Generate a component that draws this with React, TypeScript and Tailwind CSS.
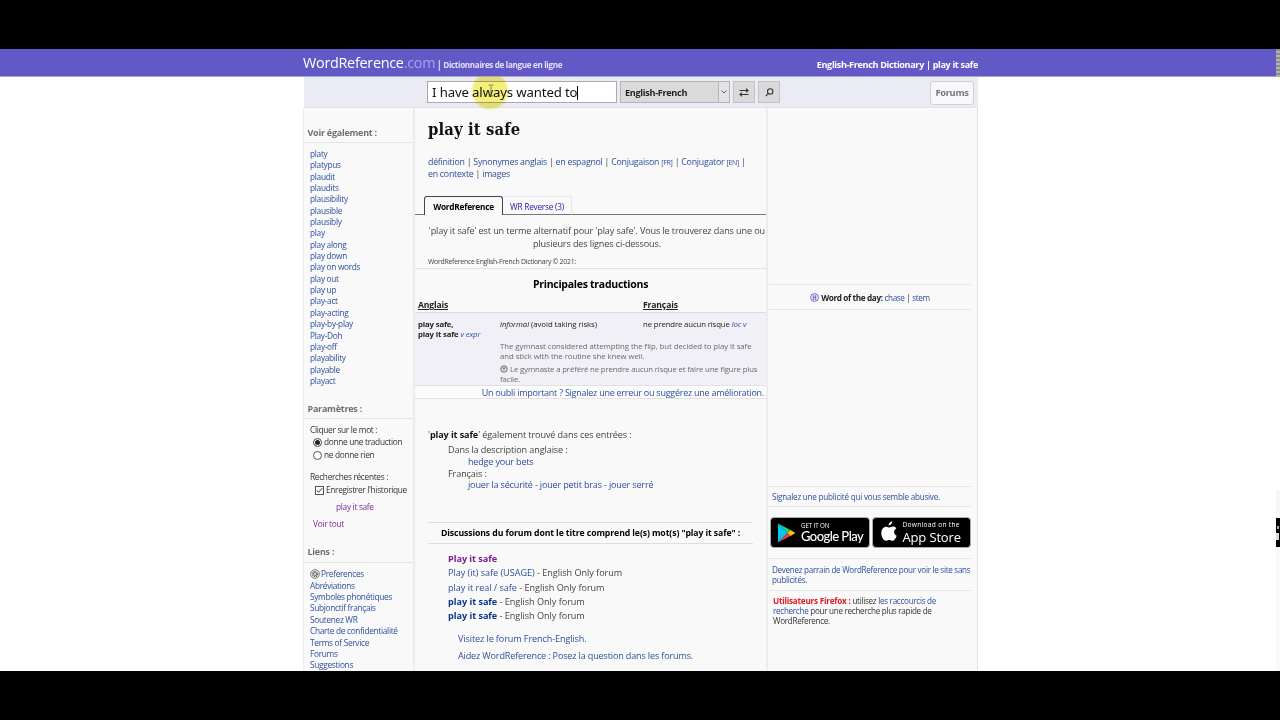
import React, { FC, ReactNode } from 'react'

const seeAlso = [
    'platy', 'platypus', 'plaudit', 'plaudits', 'plausibility', 'plausible', 'plausibly',
    'play', 'play along', 'play down', 'play on words', 'play out', 'play up', 'play-act',
    'play-acting', 'play-by-play', 'Play-Doh', 'play-off', 'playability', 'playable', 'playact',
]

const siteLinks = [
    'Abréviations', 'Symboles phonétiques', 'Subjonctif français', 'Soutenez WR',
    'Charte de confidentialité', 'Terms of Service', 'Forums', 'Suggestions',
]

const threads = [
    { title: 'Play it safe', style: 'font-bold text-[#7a1a8c]', forum: '' },
    { title: 'Play (it) safe (USAGE)', style: '', forum: 'English Only forum' },
    { title: 'play it real / safe', style: '', forum: 'English Only forum' },
    { title: 'play it safe', style: 'font-bold text-[#0b328f]', forum: 'English Only forum' },
    { title: 'play it safe', style: 'font-bold text-[#0b328f]', forum: 'English Only forum' },
]

const Link: FC<{ children: ReactNode; className?: string }> = ({ children, className = 'text-[#2c4f9c]' }) => (
    <a className={className}>{children}</a>
)

const SideTitle: FC<{ children: ReactNode; className: string }> = ({ children, className }) => (
    <h3 className={`flex items-end border-b border-[#e4e4e6] pl-[3.5px] text-[9px] leading-[12px] font-bold tracking-[-0.25px] text-[#70706f] ${className}`}>
        {children}
    </h3>
)

const Header: FC = () => (
    <header className="flex h-[28px] border-b border-[#a9a5cc] bg-[#6258c6] text-white">
        <div className="ml-[303px] flex w-[675px] items-baseline whitespace-nowrap">
            <span className="text-[14.4px] leading-[27px] tracking-[-0.28px]">
                WordReference<span className="text-[#aaa0f0]">.com</span>
            </span>
            <span className="ml-[1px] text-[11px]">|</span>
            <span className="ml-[1px] text-[8.1px] font-bold tracking-[-0.33px] text-[#e3e0fb]">Dictionnaires de langue en ligne</span>
            <span className="ml-auto text-[9.1px] font-bold tracking-[-0.35px]">English-French Dictionary | play it safe</span>
        </div>
        <div className="ml-auto w-[4px] bg-[repeating-linear-gradient(180deg,#8a8a8a_0px,#8a8a8a_2px,#b5b5b0_2px,#b5b5b0_4px)]" />
    </header>
)

const SearchBar: FC = () => (
    <div className="ml-[304px] flex h-[31px] w-[674px] border-b border-[#e2e2e8] bg-[#ebebf3] pt-[4px]">
        <div className="relative ml-[123px] flex h-[22px] w-[190px] items-center border border-[#a9a9b4] bg-white pt-px pl-[4px] font-['Noto_Sans',sans-serif] text-[13.2px] tracking-[-0.13px] whitespace-nowrap text-[#111]">
            I have always wanted to<span className="h-[14px] w-px bg-black" />
            {/* mouse highlight */}
            <div className="absolute -top-[9px] left-[44px] size-[36px] rounded-full bg-[#f0e850]/75 mix-blend-multiply blur-[1px]" />
            <svg className="absolute top-[2px] left-[59px]" width="8" height="13" viewBox="0 0 8 13" fill="none" stroke="#6b6935" strokeWidth="0.8">
                <path d="M1.5 1h2l.5.5.5-.5h2M4 1.5v10M1.5 12h2l.5-.5.5.5h2" />
            </svg>
        </div>
        <div className="ml-[3px] flex h-[22px] w-[110px] items-center border border-[#b4b4b8] bg-[#dadadb] pt-px pl-[4px] text-[9.1px] font-bold tracking-[-0.3px] text-[#222]">
            English-French
            <span className="-mt-px ml-auto flex h-[20px] w-[11px] items-center justify-center border-l border-[#b4b4b8] bg-[#e3e3e4]">
                <svg width="6" height="4" viewBox="0 0 6 4" fill="none" stroke="#555" strokeWidth="0.9"><path d="M.5.5 3 3 5.5.5" /></svg>
            </span>
        </div>
        <button className="ml-[3px] flex h-[22px] w-[22px] items-center justify-center border border-[#c2c2c6] bg-[#dadadb]">
            <svg width="10" height="9" viewBox="0 0 10 9" fill="none" stroke="#333" strokeWidth="1.1"><path d="M.5 2.500h8.500M7 .7l2 1.800-2 1.800M9.500 6.500H1M3 4.700 1 6.500l2 1.800" /></svg>
        </button>
        <button className="ml-[3px] flex h-[22px] w-[22px] items-center justify-center border border-[#c2c2c6] bg-[#dadadb]">
            <svg width="9" height="9" viewBox="0 0 9 9" fill="none" stroke="#333" strokeWidth="1.1"><circle cx="5.200" cy="3.500" r="2.700" /><path d="M3.300 5.400.8 8.200" /></svg>
        </button>
        <button className="mr-[4px] ml-auto h-[24px] w-[44px] rounded-[3px] border border-[#d0d0d6] bg-[#f8f8fa] text-[9.3px] font-bold tracking-[-0.3px] text-[#77777a]">
            Forums
        </button>
    </div>
)

const LeftColumn: FC = () => (
    <aside className="w-[111px] border-r-2 border-[#ececee] text-[8.3px] leading-[12px] tracking-[-0.3px] text-[#333]">
        <SideTitle className="h-[35px] pb-[3px]">Voir également :</SideTitle>
        <ul className="mt-[5px] pl-[6px] leading-[11.340px]">
            {seeAlso.map((word) => (
                <li key={word}><Link>{word}</Link></li>
            ))}
        </ul>
        <SideTitle className="h-[33px] pb-[3px]">Paramètres :</SideTitle>
        <div className="mt-[5px] pl-[6px]">Cliquer sur le mot :</div>
        <div className="flex h-[12px] items-center pl-[9px]">
            <span className="mr-[2px] flex size-[9px] items-center justify-center rounded-full border border-[#444] bg-white">
                <span className="size-[5px] rounded-full bg-[#222]" />
            </span>
            donne une traduction
        </div>
        <div className="mt-px flex h-[12px] items-center pl-[9px]">
            <span className="mr-[2px] size-[9px] rounded-full border border-[#555] bg-white" />
            ne donne rien
        </div>
        <div className="mt-[10px] pl-[6px]">Recherches récentes :</div>
        <div className="mt-px flex h-[12px] items-center pl-[11px]">
            <span className="mr-[2px] flex size-[9px] items-center justify-center border border-[#555] bg-white">
                <svg width="7" height="7" viewBox="0 0 7 7" fill="none" stroke="#333" strokeWidth="1"><path d="m.8 3.500 1.700 1.800L6.200 1.200" /></svg>
            </span>
            Enregistrer l'historique
        </div>
        <div className="mt-[5px] pl-[32px] text-[#7a2a92]">play it safe</div>
        <div className="mt-[5px] pl-[9px] text-[#7a2a92]">Voir tout</div>
        <SideTitle className="h-[33px] pb-[4px]">Liens :</SideTitle>
        <ul className="mt-[5px] pl-[6px] leading-[11.400px]">
            <li className="flex items-center">
                <svg className="mr-px" width="10" height="10" viewBox="0 0 10 10" fill="none" stroke="#555">
                    <circle cx="5" cy="5" r="4.300" strokeWidth="0.800" />
                    <circle cx="5" cy="5" r="2.500" strokeWidth="1.200" strokeDasharray="1.200 0.760" />
                    <circle cx="5" cy="5" r="1.500" strokeWidth="0.800" />
                </svg>
                <Link>Preferences</Link>
            </li>
            {siteLinks.map((name) => (
                <li key={name}><Link>{name}</Link></li>
            ))}
        </ul>
    </aside>
)

const Translations: FC = () => (
    <section className="text-[7.800px] leading-[10px] tracking-[-0.060px] text-[#222]">
        <h2 className="h-[31px] border-t border-[#e2e2e4] pt-[8px] text-center text-[10.500px] leading-[14px] font-bold tracking-[-0.270px] text-black">Principales traductions</h2>
        <div className="grid h-[14px] grid-cols-[225px_1fr] border-b border-[#dcdce4] pl-[3px] text-[8.600px] leading-[12px] font-bold tracking-[-0.150px] underline">
            <span>Anglais</span>
            <span>Français</span>
        </div>
        <div className="grid h-[72px] grid-cols-[82px_143px_1fr] content-start bg-[#f0f0f6] pt-[6px] pl-[3px]">
            <div className="font-bold tracking-[-0.160px]">
                play safe,<br />
                play it safe <em className="font-normal text-[#2c4f9c]">v expr</em>
            </div>
            <div><em>informal</em> (avoid taking risks)</div>
            <div className="tracking-[-0.140px]">ne prendre aucun risque <em className="text-[#2c4f9c]">loc v</em></div>
            <div className="col-span-2 col-start-2 mt-[2px] text-[#6a6a6d]">
                The gymnast considered attempting the flip, but decided to play it safe<br />
                and stick with the routine she knew well.
            </div>
            <div className="col-span-2 col-start-2 mt-[3px] tracking-[-0.140px] text-[#6a6a6d]">
                <svg className="mr-[2px] inline-block align-[-1px]" width="8" height="8" viewBox="0 0 8 8" fill="none" stroke="#555" strokeWidth="0.900">
                    <circle cx="4" cy="4" r="3.200" /><path d="M2.500 3h3M4 3v2.500" />
                </svg>
                Le gymnaste a préféré ne prendre aucun risque et faire une figure plus<br />
                facile.
            </div>
        </div>
        <div className="h-[14px] border-y border-[#e2e2e4] bg-[#fcfcfc] pr-[2px] text-right text-[9px] leading-[13px] tracking-[-0.250px]">
            <Link>Un oubli important ? Signalez une erreur ou suggérez une amélioration.</Link>
        </div>
    </section>
)

const MainColumn: FC = () => (
    <main className="w-[353px] border-r-2 border-[#ececee] text-[9.100px] leading-[12px] tracking-[-0.110px] text-[#444]">
        <h1 className="h-[47px] pt-[10px] pl-[13px] font-['DejaVu_Serif_Condensed','DejaVu_Serif',serif] text-[16.500px] leading-[24px] font-bold tracking-[0.120px] text-[#111]">play it safe</h1>
        <div className="h-[41px] pt-[2px] pl-[13px] text-[8.800px] leading-[11.700px] tracking-[-0.250px]">
            <Link>définition</Link> | <Link>Synonymes anglais</Link> | <Link>en espagnol</Link> | <Link>Conjugaison <span className="text-[7px]">[FR]</span></Link> | <Link>Conjugator <span className="text-[7px]">[EN]</span></Link> |<br />
            <Link>en contexte</Link> | <Link>images</Link>
        </div>
        <div className="flex h-[19px] items-end text-[8.300px] tracking-[-0.250px]">
            <span className="h-px w-[9px] bg-[#777]" />
            <span className="h-[19px] w-[79px] rounded-t-[3px] border border-b-0 border-[#444] pt-[4px] text-center font-bold text-black">WordReference</span>
            <span className="h-[19px] w-[69px] border-t border-r border-b border-t-[#e6e6ea] border-r-[#e6e6ea] border-b-[#777] pt-[4px] text-center text-[#2a23a8]">WR Reverse (3)</span>
            <span className="h-px flex-1 bg-[#777]" />
        </div>
        <p className="mt-[10px] pr-[1px] text-right leading-[12.500px] tracking-[-0.120px]">
            'play it safe' est un terme alternatif pour 'play safe'. Vous le trouverez dans une ou
        </p>
        <p className="pl-[13px] text-center leading-[12.500px] tracking-[-0.130px]">plusieurs des lignes ci-dessous.</p>
        <p className="h-[18px] pt-[6px] pl-[13px] text-[6.900px] leading-[12px] tracking-[-0.260px]">WordReference English-French Dictionary © 2021:</p>
        <Translations />
        <div className="mt-[30px] pl-[13px]">
            <p>'<b className="text-[#111]">play it safe</b>' également trouvé dans ces entrées :</p>
            <div className="mt-[3px] pl-[20px] leading-[11.800px]">
                <p>Dans la description anglaise :</p>
                <p className="pl-[20px] tracking-[-0.210px]"><Link>hedge your bets</Link></p>
                <p>Français :</p>
                <p className="pl-[20px] tracking-[-0.190px]"><Link>jouer la sécurité</Link> - <Link>jouer petit bras</Link> - <Link>jouer serré</Link></p>
            </div>
        </div>
        <h4 className="mt-[31px] mr-[13px] ml-[13px] h-[22px] border-y border-[#dededf] text-center text-[8.700px] leading-[21px] font-bold tracking-[-0.100px] text-black">
            Discussions du forum dont le titre comprend le(s) mot(s) "play it safe" :
        </h4>
        <ul className="mt-[8px] pl-[33px] leading-[14.250px] tracking-[-0.030px]">
            {threads.map((thread, i) => (
                <li key={i}>
                    <Link className={thread.style || undefined}>{thread.title}</Link>
                    {thread.forum && ` - ${thread.forum}`}
                </li>
            ))}
        </ul>
        <div className="mt-[7px] pl-[43px] leading-[17px] tracking-[-0.170px]">
            <p className="tracking-[-0.110px]"><Link>Visitez le forum French-English.</Link></p>
            <p><Link>Aidez WordReference : Posez la question dans les forums.</Link></p>
        </div>
    </main>
)

const RightColumn: FC = () => (
    <aside className="w-[210px] border-r border-[#e2e2e4] pr-[6px] pl-[1px] text-[8.100px] leading-[10px] tracking-[-0.220px] text-[#333]">
        <div className="mt-[176px] flex h-[26px] items-center justify-center border-y border-[#e4e4e6] pt-px">
            <svg className="mr-[2px]" width="9" height="9" viewBox="0 0 9 9" fill="none" stroke="#6258c6">
                <circle cx="4.500" cy="4.500" r="3.900" strokeWidth="0.900" />
                <path d="M2.500 3h4M2.500 4.600h4M2.500 6.200h4M3.500 2.500v4M5.500 2.500v4" strokeWidth="0.700" />
            </svg>
            <span className="text-[8.200px] tracking-[-0.370px]"><b className="text-[#222]">Word of the day:</b> <Link>chase</Link> | <Link>stem</Link></span>
        </div>
        <div className="mt-[176px] h-[21px] border-y border-[#e4e4e6] pl-[3px] leading-[20px]">
            <Link>Signalez une publicité qui vous semble abusive.</Link>
        </div>
        <div className="mt-[10px] flex gap-[2px] pl-[1px] whitespace-nowrap text-white">
            <div className="flex h-[31px] w-[100px] rounded-[4px] border border-[#aaa] bg-black pt-[4px] pl-[6px]">
                <svg className="mt-px" width="19" height="20" viewBox="0 0 19 20">
                    <path d="M1 .5v19l9.500-9.500z" fill="#00c8f0" />
                    <path d="M1 .5 13.500 7l-3 3z" fill="#10d77b" />
                    <path d="M1 19.500 13.500 13l-3-3z" fill="#ea3b50" />
                    <path d="M13.500 7 18.500 10l-5 3-3-3z" fill="#ffc400" />
                </svg>
                <div className="ml-[5px]">
                    <div className="text-[6.200px] leading-[7px] tracking-[-0.100px]">GET IT ON</div>
                    <div className="font-[Lato,sans-serif] text-[13px] leading-[14px] font-medium tracking-[-0.550px]">Google Play</div>
                </div>
            </div>
            <div className="flex h-[31px] w-[100px] rounded-[4px] border border-[#aaa] bg-black pt-[2px] pl-[8px]">
                <svg className="mt-px" width="16" height="21" viewBox="0 0 16 21" fill="#fff">
                    <path d="M11.300.3c.1 2.200-1.700 4.200-3.700 4.200C7.400 2.400 9.300.5 11.300.3zM15.300 7.400c-1.500.9-2.200 2-2.200 3.500 0 1.800 1 3.200 2.600 3.900-.7 2.200-2.400 5-4.100 5-1.300 0-1.800-.8-3.400-.8s-2.100.8-3.300.8C2.500 19.800.3 15.800.3 12c0-3.900 2.300-6.300 5-6.300 1.400 0 2.300.9 3.300.9.900 0 2-1 3.700-1 1.200 0 2.300.6 3 1.800z" />
                </svg>
                <div className="ml-[6px]">
                    <div className="text-[6.600px] leading-[9px] font-medium tracking-[0.300px]">Download on the</div>
                    <div className="text-[13px] leading-[17px] font-medium tracking-[-0.150px]">App Store</div>
                </div>
            </div>
        </div>
        <div className="mt-[10px] h-[33px] border-y border-[#e4e4e6] pt-[6px] pl-[3px] tracking-[-0.290px] whitespace-nowrap">
            <Link>Devenez parrain de WordReference pour voir le site sans<br />publicités.</Link>
        </div>
        <p className="mt-[5px] pl-[4px] tracking-[-0.280px]">
            <b className="tracking-[-0.200px] text-[#dd1a22]">Utilisateurs Firefox :</b> utilisez <Link>les raccourcis de<br />recherche</Link> pour une recherche plus rapide de<br />WordReference.
        </p>
    </aside>
)

const App: FC = () => (
    <div className="h-[720px] w-[1280px] overflow-hidden bg-black pt-[49px] font-['Open_Sans','Noto_Sans',sans-serif]">
        <Header />
        <div className="h-[594px] overflow-hidden bg-white">
            <SearchBar />
            <div className="flex h-[563px]">
                <div className="ml-[303px] flex w-[675px] border-l border-[#ececee] bg-[#f9f9f9] whitespace-nowrap">
                    <LeftColumn />
                    <MainColumn />
                    <RightColumn />
                </div>
                {/* sliver of the next page at the edge of the window */}
                <div className="ml-auto w-[4px] pt-[382px]">
                    <div className="h-[28px] bg-[#f7f7f7]" />
                    <div className="h-[29px] bg-black pt-[8px]">
                        <div className="ml-px h-[3px] w-[2px] bg-[#aaa]" />
                        <div className="mt-[4px] h-[7px] w-[3px] bg-[#ddd]" />
                    </div>
                    <div className="h-[124px] bg-[#f9f9f9]" />
                </div>
            </div>
        </div>
    </div>
)

export default App
